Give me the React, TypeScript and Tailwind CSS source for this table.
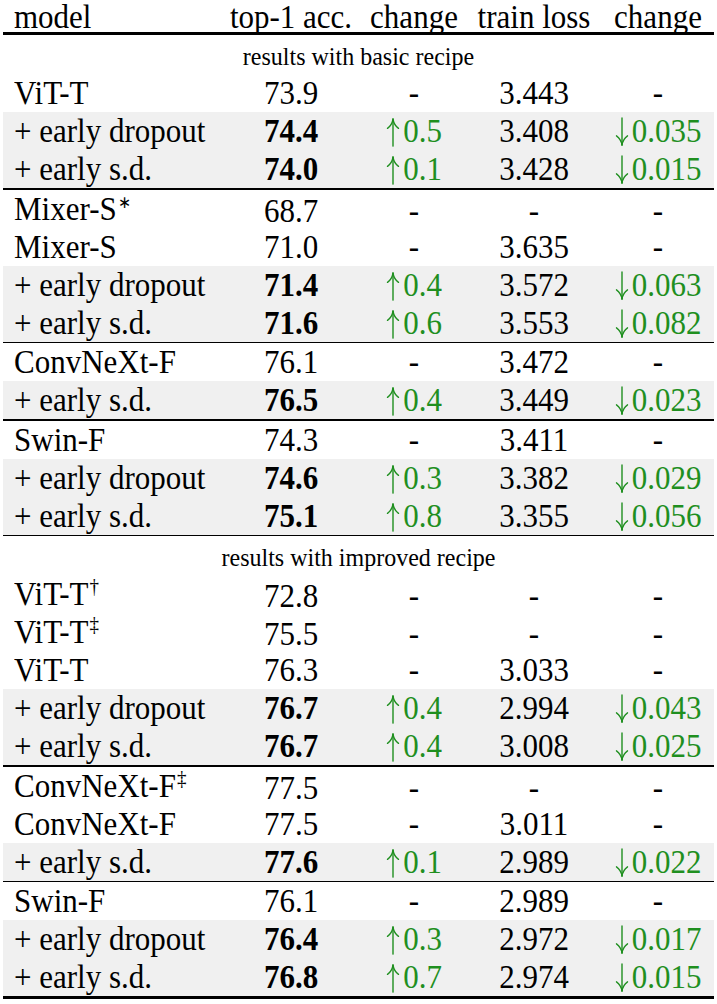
type Row = {
  model: string;
  sup?: string;
  acc: string;
  accChange?: string;
  loss: string;
  lossChange?: string;
  early?: boolean;
};

type Block = Row[];

const BASIC: Block[] = [
  [
    { model: "ViT-T", acc: "73.9", loss: "3.443" },
    { model: "+ early dropout", acc: "74.4", accChange: "0.5", loss: "3.408", lossChange: "0.035", early: true },
    { model: "+ early s.d.", acc: "74.0", accChange: "0.1", loss: "3.428", lossChange: "0.015", early: true },
  ],
  [
    { model: "Mixer-S", sup: "∗", acc: "68.7", loss: "-" },
    { model: "Mixer-S", acc: "71.0", loss: "3.635" },
    { model: "+ early dropout", acc: "71.4", accChange: "0.4", loss: "3.572", lossChange: "0.063", early: true },
    { model: "+ early s.d.", acc: "71.6", accChange: "0.6", loss: "3.553", lossChange: "0.082", early: true },
  ],
  [
    { model: "ConvNeXt-F", acc: "76.1", loss: "3.472" },
    { model: "+ early s.d.", acc: "76.5", accChange: "0.4", loss: "3.449", lossChange: "0.023", early: true },
  ],
  [
    { model: "Swin-F", acc: "74.3", loss: "3.411" },
    { model: "+ early dropout", acc: "74.6", accChange: "0.3", loss: "3.382", lossChange: "0.029", early: true },
    { model: "+ early s.d.", acc: "75.1", accChange: "0.8", loss: "3.355", lossChange: "0.056", early: true },
  ],
];

const IMPROVED: Block[] = [
  [
    { model: "ViT-T", sup: "†", acc: "72.8", loss: "-" },
    { model: "ViT-T", sup: "‡", acc: "75.5", loss: "-" },
    { model: "ViT-T", acc: "76.3", loss: "3.033" },
    { model: "+ early dropout", acc: "76.7", accChange: "0.4", loss: "2.994", lossChange: "0.043", early: true },
    { model: "+ early s.d.", acc: "76.7", accChange: "0.4", loss: "3.008", lossChange: "0.025", early: true },
  ],
  [
    { model: "ConvNeXt-F", sup: "‡", acc: "77.5", loss: "-" },
    { model: "ConvNeXt-F", acc: "77.5", loss: "3.011" },
    { model: "+ early s.d.", acc: "77.6", accChange: "0.1", loss: "2.989", lossChange: "0.022", early: true },
  ],
  [
    { model: "Swin-F", acc: "76.1", loss: "2.989" },
    { model: "+ early dropout", acc: "76.4", accChange: "0.3", loss: "2.972", lossChange: "0.017", early: true },
    { model: "+ early s.d.", acc: "76.8", accChange: "0.7", loss: "2.974", lossChange: "0.015", early: true },
  ],
];

const COLS = "grid grid-cols-[217px_142px_104px_136px_112px]";

// thin math-style arrow, like \uparrow / \downarrow
function Arrow({ down }: { down?: boolean }) {
  return (
    <svg
      width="14"
      height="28"
      viewBox="0 0 14 28"
      className={`inline-block align-[-5px] mr-[3px] ${down ? "rotate-180" : ""}`}
      fill="none"
      stroke="currentColor"
      strokeWidth="1.4"
      strokeLinecap="round"
    >
      <path d="M7 27V2.5" />
      <path d="M7 2C6.4 5.5 4.5 8.5 1.5 10.5" />
      <path d="M7 2C7.6 5.5 9.5 8.5 12.5 10.5" />
    </svg>
  );
}

function Txt({ children, className = "" }: { children: React.ReactNode; className?: string }) {
  return <span className={`inline-block scale-y-[1.08] ${className}`}>{children}</span>;
}

function DataRow({ row }: { row: Row }) {
  return (
    <div className={`${COLS} h-[38px] items-center leading-[38px] ${row.early ? "bg-[#f0f0f0]" : ""}`}>
      <div className="pl-[11px] whitespace-nowrap">
        <Txt>
          {row.model}
          {row.sup && (
            <span className={`relative -top-[11px] ml-[1px] ${row.sup === "∗" ? "text-[16px]" : "text-[19px]"}`}>
              {row.sup}
            </span>
          )}
        </Txt>
      </div>
      <div className={`text-center ${row.early ? "font-bold" : ""}`}>
        <Txt>{row.acc}</Txt>
      </div>
      <div className="text-center text-[#1f8f1f]">
        {row.accChange ? (
          <Txt>
            <Arrow />
            {row.accChange}
          </Txt>
        ) : (
          <Txt className="text-black">-</Txt>
        )}
      </div>
      <div className="text-center">
        <Txt>{row.loss}</Txt>
      </div>
      <div className="text-center text-[#1f8f1f]">
        {row.lossChange ? (
          <Txt>
            <Arrow down />
            {row.lossChange}
          </Txt>
        ) : (
          <Txt className="text-black">-</Txt>
        )}
      </div>
    </div>
  );
}

function Section({ title, blocks, last }: { title: string; blocks: Block[]; last?: boolean }) {
  return (
    <>
      <div className="h-[39px] flex items-center justify-center pt-[3px] text-[24px]">
        <Txt>{title}</Txt>
      </div>
      {blocks.map((block, i) => (
        <div key={i}>
          {block.map((row, j) => (
            <DataRow key={j} row={row} />
          ))}
          {last && i === blocks.length - 1 ? (
            <div className="h-[3px] bg-black" />
          ) : (
            <div className="h-[1.5px] bg-black" />
          )}
        </div>
      ))}
    </>
  );
}

export default function App() {
  return (
    <div className="w-[717px] h-[1004px] bg-white text-black overflow-hidden font-['Liberation_Serif','Times_New_Roman',serif] text-[31px]">
      <div className="mx-[3px] w-[711px]">
        <div className={`${COLS} h-[32px] items-start leading-[30px] pt-[2px]`}>
          <div className="pl-[11px]">
            <Txt>model</Txt>
          </div>
          <div className="text-center whitespace-nowrap">
            <Txt>top-1 acc.</Txt>
          </div>
          <div className="text-center">
            <Txt>change</Txt>
          </div>
          <div className="text-center whitespace-nowrap">
            <Txt>train loss</Txt>
          </div>
          <div className="text-center">
            <Txt>change</Txt>
          </div>
        </div>
        <div className="h-[3px] bg-black" />
        <Section title="results with basic recipe" blocks={BASIC} />
        <Section title="results with improved recipe" blocks={IMPROVED} last />
      </div>
    </div>
  );
}
